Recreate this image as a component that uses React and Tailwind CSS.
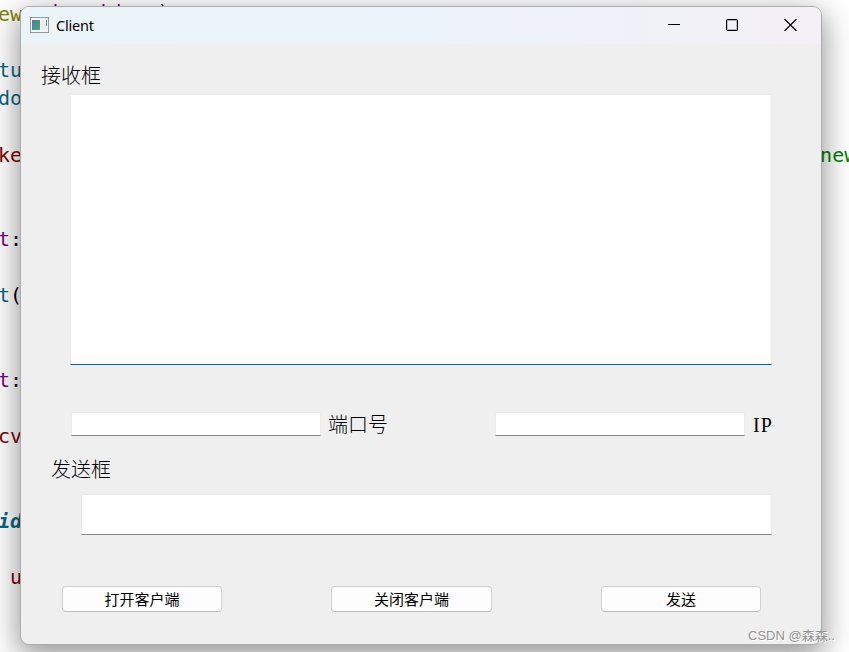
import clsx from "clsx"

const CODE_LINES = [
  { text: "ew", className: "text-[#858000]", rest: true },
  {},
  { text: "tu", className: "text-[#09677f]" },
  { text: "do", className: "text-[#09677f]" },
  {},
  { text: "ke", className: "text-[#800000]", tail: "new" },
  {},
  {},
  { text: "t", className: "text-[#800080]", after: ":" },
  {},
  { text: "t", className: "text-[#09677f]", after: "(" },
  {},
  {},
  { text: "t", className: "text-[#800080]", after: ":" },
  {},
  { text: "cv", className: "text-[#800000]" },
  {},
  {},
  { text: "id", className: "font-bold italic text-[#09677f]" },
  {},
  { text: " u", className: "text-[#800000]" },
  {},
  {},
]

function CodeBackdrop() {
  return (
    <div className="absolute -left-[2px] top-0 w-[872px] font-['DejaVu_Sans_Mono','Liberation_Mono',monospace] text-[20px]">
      {CODE_LINES.map((line, i) => (
        <div key={i} className="flex h-[28.15px] items-center whitespace-pre leading-none">
          <span className={line.className}>{line.text}</span>
          {line.after && <span className="text-black">{line.after}</span>}
          {line.rest && (
            <span className="mb-[4px] ml-[3px] text-[#800080]">
              {"  i   id   "}
              <span className="text-black">)</span>
            </span>
          )}
          {line.tail && <span className="ml-[798px] text-[#008000]">{line.tail}</span>}
        </div>
      ))}
    </div>
  )
}

function AppIcon() {
  return (
    <svg width="19" height="16" viewBox="0 0 19 16" className="mb-[2px] shrink-0">
      <defs>
        <linearGradient id="screen" x1="0" y1="0" x2="1" y2="1">
          <stop offset="0" stopColor="#4b78a8" />
          <stop offset="1" stopColor="#49a96d" />
        </linearGradient>
      </defs>
      <rect x="0.5" y="0.5" width="18" height="15" fill="#f4f5f7" stroke="#9299a0" />
      <rect x="2" y="3" width="8" height="10" fill="url(#screen)" />
      <path d="M11 3h4v10h-4z" fill="#e8eaed" />
      <path d="M16 3h1v6h-1z" fill="#4b9c8a" />
    </svg>
  )
}

function TitleBar() {
  return (
    <header className="flex h-[37px] shrink-0 items-center bg-linear-to-r from-[#ebf4f8] via-[#edf3fa] to-[#f3f0f6] pl-[9px] pr-[24px]">
      <AppIcon />
      <span className="ml-[7px] font-['Noto_Sans','Open_Sans',sans-serif] text-[14.5px] tracking-[-0.2px] text-black">Client</span>
      <div className="mb-px ml-auto flex items-center gap-[46px]">
        <svg width="12" height="12" viewBox="0 0 12 12">
          <path d="M0 5.5h12" stroke="#000" />
        </svg>
        <svg width="12" height="12" viewBox="0 0 12 12" fill="none">
          <rect x="0.6" y="0.6" width="10.8" height="10.8" rx="1" stroke="#000" strokeWidth="1.2" />
        </svg>
        <svg width="13" height="12" viewBox="0 0 13 12">
          <path d="M.5 0l12 12M12.5 0l-12 12" stroke="#000" strokeWidth="1.2" />
        </svg>
      </div>
    </header>
  )
}

function Label({ className, children }) {
  return (
    <span
      className={clsx(
        "whitespace-nowrap font-['Noto_Sans_CJK_SC',sans-serif] text-[20px] font-light leading-[24px] text-black",
        className
      )}
    >
      {children}
    </span>
  )
}

function Field({ className }) {
  return (
    <input
      type="text"
      className={clsx("block border border-[#ebebeb] border-b-[#868686] bg-white outline-none", className)}
    />
  )
}

function PushButton({ className, children }) {
  return (
    <button
      className={clsx(
        "h-[26px] rounded-[4px] border border-[#d0d0d0] border-b-[#bbb] bg-[#fdfdfd] font-['Noto_Sans_CJK_SC',sans-serif] text-[15px] leading-[22px] text-black",
        className
      )}
    >
      {children}
    </button>
  )
}

export default function App() {
  return (
    <div className="relative h-[652px] w-[849px] overflow-hidden bg-white pl-5 pt-[6px]">
      <CodeBackdrop />

      <main className="relative flex h-[639px] w-[802px] flex-col overflow-hidden rounded-[9px] border border-[#acacac] bg-[#efefef] shadow-[0_9px_30px_2px_rgba(0,0,0,0.42)]">
        <TitleBar />

        <div className="flex flex-col">
          <Label className="ml-5 mt-[19px]">接收框</Label>
          <textarea className="ml-[49px] mt-[7px] block h-[271px] w-[702px] resize-none border border-[#ebebeb] border-b-[#0067b5] bg-white outline-none" />

          <div className="ml-[50px] mt-[47px] flex h-[24px] items-center">
            <Field className="h-[24px] w-[250px]" />
            <Label className="ml-[7px]">端口号</Label>
            <Field className="ml-[107px] h-[24px] w-[250px]" />
            <span className="ml-[8px] mt-[2px] font-['Liberation_Serif',serif] text-[20px] leading-[24px] tracking-[1px] text-black">IP</span>
          </div>

          <Label className="ml-[30px] mt-[21px]">发送框</Label>
          <Field className="ml-[60px] mt-[13px] h-[41px] w-[691px]" />

          <div className="ml-[41px] mt-[51px] flex">
            <PushButton className="w-[160px]">打开客户端</PushButton>
            <PushButton className="ml-[109px] w-[161px]">关闭客户端</PushButton>
            <PushButton className="ml-[109px] w-[160px]">发送</PushButton>
          </div>
        </div>
      </main>

      <span className="absolute left-[748px] top-[627px] whitespace-nowrap font-['Liberation_Sans','Noto_Sans_CJK_SC',sans-serif] text-[13px] leading-[18px] text-[#929292] [text-shadow:1px_1px_0_#fff]">
        CSDN @森森..
      </span>
    </div>
  )
}
